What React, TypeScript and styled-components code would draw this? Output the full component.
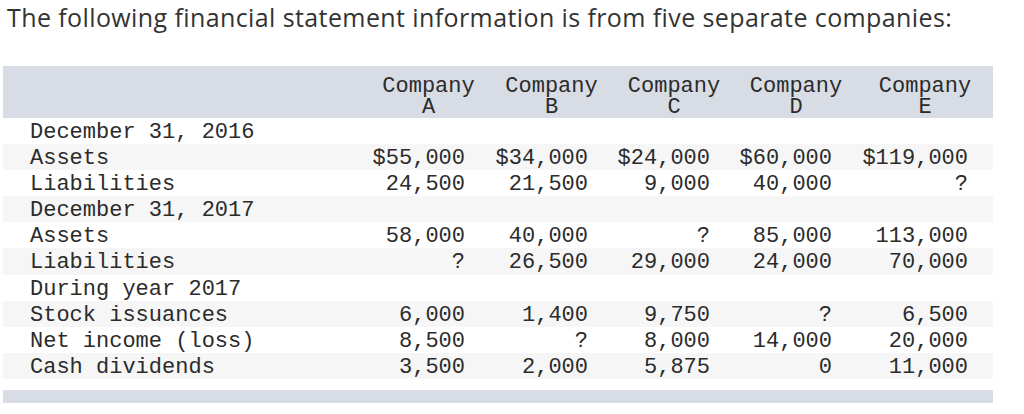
import React from "react";
import styled, { createGlobalStyle } from "styled-components";

const GlobalStyle = createGlobalStyle`
  html, body { margin: 0; padding: 0; background: #ffffff; }
  body { width: 1024px; height: 414px; overflow: hidden; }
`;

const Page = styled.div`
  padding: 0 0 0 3px;
  display: flex;
  flex-direction: column;
`;

const Title = styled.h1`
  margin: 0;
  padding: 3px 0 0 4px;
  height: 66px;
  box-sizing: border-box;
  font-family: "Open Sans", "Liberation Sans", sans-serif;
  font-weight: 400;
  font-size: 25px;
  letter-spacing: 0.4px;
  line-height: 28px;
  color: #333333;
  white-space: nowrap;
`;

const COLS = "364px 123px 123px 122px 122px 136px";

const Table = styled.div`
  width: 990px;
  display: flex;
  flex-direction: column;
  font-family: "Liberation Mono", "DejaVu Sans Mono", monospace;
  font-size: 22px;
  color: #2b2b2b;
`;

const HeaderRow = styled.div`
  display: grid;
  grid-template-columns: ${COLS};
  height: 52px;
  box-sizing: border-box;
  padding-top: 10px;
  background: #d8dde5;
`;

const HeadCell = styled.div`
  display: flex;
  flex-direction: column;
  align-items: center;
`;

const HeadLine = styled.div`
  height: 21px;
  line-height: 21px;
`;

const Row = styled.div<{ $shade: boolean }>`
  display: grid;
  grid-template-columns: ${COLS};
  height: 26.1px;
  box-sizing: border-box;
  padding-top: 3px;
  line-height: 23px;
  background: ${(p) => (p.$shade ? "#f6f6f6" : "#ffffff")};
  white-space: pre;
`;

const Label = styled.div`
  padding-left: 27px;
`;

const Num = styled.div`
  text-align: right;
  padding-right: 25px;
`;

const Footer = styled.div`
  margin-top: 11px;
  height: 13px;
  background: #d8dde5;
`;

type R = [string, string[]];

const rows: R[] = [
  ["December 31, 2016", []],
  ["Assets", ["$55,000", "$34,000", "$24,000", "$60,000", "$119,000"]],
  ["Liabilities", ["24,500", "21,500", "9,000", "40,000", "?"]],
  ["December 31, 2017", []],
  ["Assets", ["58,000", "40,000", "?", "85,000", "113,000"]],
  ["Liabilities", ["?", "26,500", "29,000", "24,000", "70,000"]],
  ["During year 2017", []],
  ["Stock issuances", ["6,000", "1,400", "9,750", "?", "6,500"]],
  ["Net income (loss)", ["8,500", "?", "8,000", "14,000", "20,000"]],
  ["Cash dividends", ["3,500", "2,000", "5,875", "0", "11,000"]],
];

const companies = ["A", "B", "C", "D", "E"];

export default function App() {
  return (
    <>
      <GlobalStyle />
      <Page>
        <Title>The following financial statement information is from five separate companies:</Title>
        <Table>
          <HeaderRow>
            <HeadCell />
            {companies.map((c) => (
              <HeadCell key={c}>
                <HeadLine>Company</HeadLine>
                <HeadLine>{c}</HeadLine>
              </HeadCell>
            ))}
          </HeaderRow>
          {rows.map(([label, vals], i) => (
            <Row key={i} $shade={i % 2 === 1}>
              <Label>{label}</Label>
              {(vals.length ? vals : ["", "", "", "", ""]).map((v, j) => (
                <Num key={j}>{v}</Num>
              ))}
            </Row>
          ))}
          <Footer />
        </Table>
      </Page>
    </>
  );
}
